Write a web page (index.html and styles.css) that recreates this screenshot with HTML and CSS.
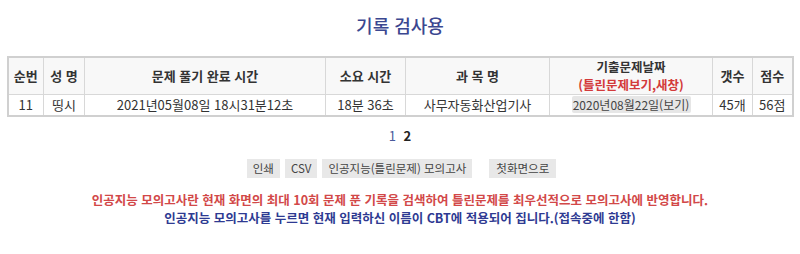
FILE: index.html
```html
<!DOCTYPE html>
<html lang="ko">
<head>
  <meta charset="UTF-8" />
  <title>기록 검사용</title>
  <link rel="stylesheet" href="styles.css">
</head>
<body>

<h1 class="title">기록 검사용</h1>

<table class="record">
  <colgroup>
    <col class="c-no"><col class="c-name"><col class="c-time"><col class="c-spent">
    <col class="c-subject"><col class="c-date"><col class="c-count"><col class="c-score">
  </colgroup>
  <tr>
    <th>순번</th>
    <th>성 명</th>
    <th>문제 풀기 완료 시간</th>
    <th>소요 시간</th>
    <th>과 목 명</th>
    <th class="two-line">기출문제날짜<br><span class="red">(틀린문제보기,새창)</span></th>
    <th>갯수</th>
    <th>점수</th>
  </tr>
  <tr>
    <td>11</td>
    <td>띵시</td>
    <td>2021년05월08일 18시31분12초</td>
    <td>18분 36초</td>
    <td>사무자동화산업기사</td>
    <td><button class="view" type="button">2020년08월22일(보기)</button></td>
    <td>45개</td>
    <td>56점</td>
  </tr>
</table>

<div class="pager">
  <a href="#" class="page">1</a>
  <b class="page current">2</b>
</div>

<div class="actions">
  <button type="button">인쇄</button>
  <button type="button">CSV</button>
  <button type="button">인공지능(틀린문제) 모의고사</button>
  <button type="button" class="home">첫화면으로</button>
</div>

<p class="notice red-note">인공지능 모의고사란 현재 화면의 최대 10회 문제 푼 기록을 검색하여 틀린문제를 최우선적으로 모의고사에 반영합니다.</p>
<p class="notice blue-note">인공지능 모의고사를 누르면 현재 입력하신 이름이 CBT에 적용되어 집니다.(접속중에 한함)</p>

</body>
</html>
```

FILE: styles.css
```css
body {
  margin: 0;
  background: #fff;
  color: #333;
  font-family: "Noto Sans CJK KR", "Noto Sans", sans-serif;
  font-size: 13px;
}
.title {
  margin: 10px 0 0;
  height: 30px;
  line-height: 30px;
  text-align: center;
  font-size: 18px;
  font-weight: 500;
  color: #3b4790;
}
.record {
  width: 785px;
  margin: 16px auto 0;
  border-collapse: collapse;
  border: 2px solid #d0d0d0;
  table-layout: fixed;
}
.c-no { width: 36px; }
.c-name { width: 41px; }
.c-time { width: 241px; }
.c-spent { width: 80px; }
.c-subject { width: 144px; }
.c-date { width: 163px; }
.c-count { width: 40px; }
.c-score { width: 40px; }
.record th, .record td {
  border: 1px solid #d8d8d8;
  text-align: center;
  padding: 0;
  color: #333;
}
.record th {
  height: 35px;
  font-weight: 700;
  line-height: 18px;
  background: #f8f8f8;
}
.record th.two-line {
  font-size: 12.5px;
}
.record td {
  height: 20px;
  line-height: 20px;
}
.red {
  color: #d33a3a;
}
.view {
  font-family: inherit;
  font-size: 12px;
  color: #444;
  background: #e6e6e6;
  border: none;
  border-radius: 2px;
  width: 119px;
  height: 17px;
  padding: 0;
  line-height: 17px;
}
.pager {
  text-align: center;
  margin-top: 10px;
  height: 18px;
  line-height: 18px;
  font-size: 13px;
}
.pager .page {
  color: #4a5a9a;
  text-decoration: none;
  margin: 0 2px;
}
.pager .current {
  color: #222;
}
.actions {
  display: flex;
  justify-content: center;
  gap: 5px;
  margin-top: 14px;
  padding-left: 3px;
}
.actions button {
  font-family: inherit;
  font-size: 11.5px;
  color: #444;
  background: #e8e8e8;
  border: none;
  height: 19px;
  padding: 0 6px;
  line-height: 19px;
}
.actions .home {
  margin-left: 12px;
  padding: 0 7px;
}
.notice {
  margin: 0;
  text-align: center;
  font-weight: 700;
  font-size: 12.5px;
  line-height: 18px;
}
.red-note {
  margin-top: 13px;
  color: #d24848;
}
.blue-note {
  color: #2e3a92;
}
```
